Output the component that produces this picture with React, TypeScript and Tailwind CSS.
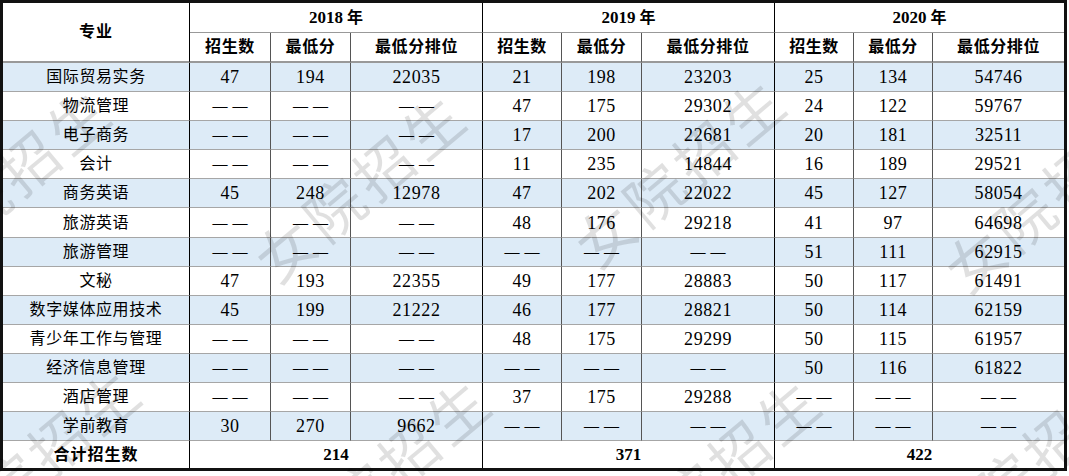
const D = "——";

const years = ["2018", "2019", "2020"];

const rows: string[][] = [
  ["国际贸易实务", "47", "194", "22035", "21", "198", "23203", "25", "134", "54746"],
  ["物流管理", D, D, D, "47", "175", "29302", "24", "122", "59767"],
  ["电子商务", D, D, D, "17", "200", "22681", "20", "181", "32511"],
  ["会计", D, D, D, "11", "235", "14844", "16", "189", "29521"],
  ["商务英语", "45", "248", "12978", "47", "202", "22022", "45", "127", "58054"],
  ["旅游英语", D, D, D, "48", "176", "29218", "41", "97", "64698"],
  ["旅游管理", D, D, D, D, D, D, "51", "111", "62915"],
  ["文秘", "47", "193", "22355", "49", "177", "28883", "50", "117", "61491"],
  ["数字媒体应用技术", "45", "199", "21222", "46", "177", "28821", "50", "114", "62159"],
  ["青少年工作与管理", D, D, D, "48", "175", "29299", "50", "115", "61957"],
  ["经济信息管理", D, D, D, D, D, D, "50", "116", "61822"],
  ["酒店管理", D, D, D, "37", "175", "29288", D, D, D],
  ["学前教育", "30", "270", "9662", D, D, D, D, D, D],
];

const totals = ["214", "371", "422"];

// right border per column: year groups end in black, the rest dark gray
const colBorder = (i: number) =>
  i === 9 ? "" : i === 0 || i === 3 || i === 6 ? "border-r border-r-black" : "border-r border-r-[#555]";

function Cell({ value }: { value: string }) {
  if (value === D) {
    return <span className="text-[15px] font-bold tracking-[5px] pl-[5px]">{D}</span>;
  }
  if (/^\d+$/.test(value)) {
    return <span className="text-[18px] tracking-[0.6px]">{value}</span>;
  }
  return <span className="text-[16px] tracking-[0.6px]">{value}</span>;
}

const marks = [
  "left-[5px] top-[180px]",
  "left-[360px] top-[185px]",
  "left-[680px] top-[170px]",
  "left-[1050px] top-[195px]",
  "left-[35px] top-[460px]",
  "left-[385px] top-[470px]",
  "left-[715px] top-[470px]",
  "left-[1030px] top-[460px]",
];

export default function App() {
  return (
    <div className="relative w-[1069px] h-[476px] overflow-hidden bg-white text-black font-['Liberation_Serif','Noto_Sans_CJK_SC',serif]">
      <div className="w-[1067px] border-[3px] border-[#111]">
        <table className="w-full table-fixed border-separate border-spacing-0 text-center">
          <colgroup>
            <col className="w-[187px]" />
            <col className="w-[81px]" />
            <col className="w-[80px]" />
            <col className="w-[132px]" />
            <col className="w-[79px]" />
            <col className="w-[80px]" />
            <col className="w-[133px]" />
            <col className="w-[79px]" />
            <col className="w-[79px]" />
            <col className="w-[131px]" />
          </colgroup>
          <thead>
            <tr className="h-[30px]">
              <th rowSpan={2} className="border-r border-r-black border-b-2 border-b-[#999] text-[16px] font-bold tracking-[1px]">
                专业
              </th>
              {years.map((y, i) => (
                <th
                  key={y}
                  colSpan={3}
                  className={`border-b border-b-[#999] text-[16px] font-bold ${i < 2 ? "border-r border-r-black" : ""}`}
                >
                  <span className="text-[17px]">{y}</span> 年
                </th>
              ))}
            </tr>
            <tr className="h-[30px]">
              {Array.from({ length: 9 }).map((_, i) => (
                <th
                  key={i}
                  className={`border-b-2 border-b-[#999] text-[16px] font-bold tracking-[0.6px] ${colBorder(i + 1)}`}
                >
                  {["招生数", "最低分", "最低分排位"][i % 3]}
                </th>
              ))}
            </tr>
          </thead>
          <tbody>
            {rows.map((r, ri) => (
              <tr key={r[0]} className={`h-[29.1px] ${ri % 2 === 0 ? "bg-[#ddebf7]" : "bg-white"}`}>
                {r.map((v, ci) => (
                  <td key={ci} className={`p-0 leading-none border-b border-b-[#a6a6a6] ${colBorder(ci)}`}>
                    <Cell value={v} />
                  </td>
                ))}
              </tr>
            ))}
            <tr className="h-[27px] bg-white">
              <td className="p-0 border-r border-r-black text-[16px] font-bold tracking-[1px]">合计招生数</td>
              {totals.map((t, i) => (
                <td
                  key={t}
                  colSpan={3}
                  className={`p-0 text-[17px] font-bold ${i < 2 ? "border-r border-r-black" : ""}`}
                >
                  {t}
                </td>
              ))}
            </tr>
          </tbody>
        </table>
      </div>

      {marks.map((m) => (
        <span
          key={m}
          className={`pointer-events-none absolute ${m} -translate-x-1/2 -translate-y-1/2 rotate-[-40deg] whitespace-nowrap font-['Noto_Sans_CJK_SC',sans-serif] text-[58px] tracking-[6px] text-black/[0.12]`}
        >
          女院招生
        </span>
      ))}
    </div>
  );
}
